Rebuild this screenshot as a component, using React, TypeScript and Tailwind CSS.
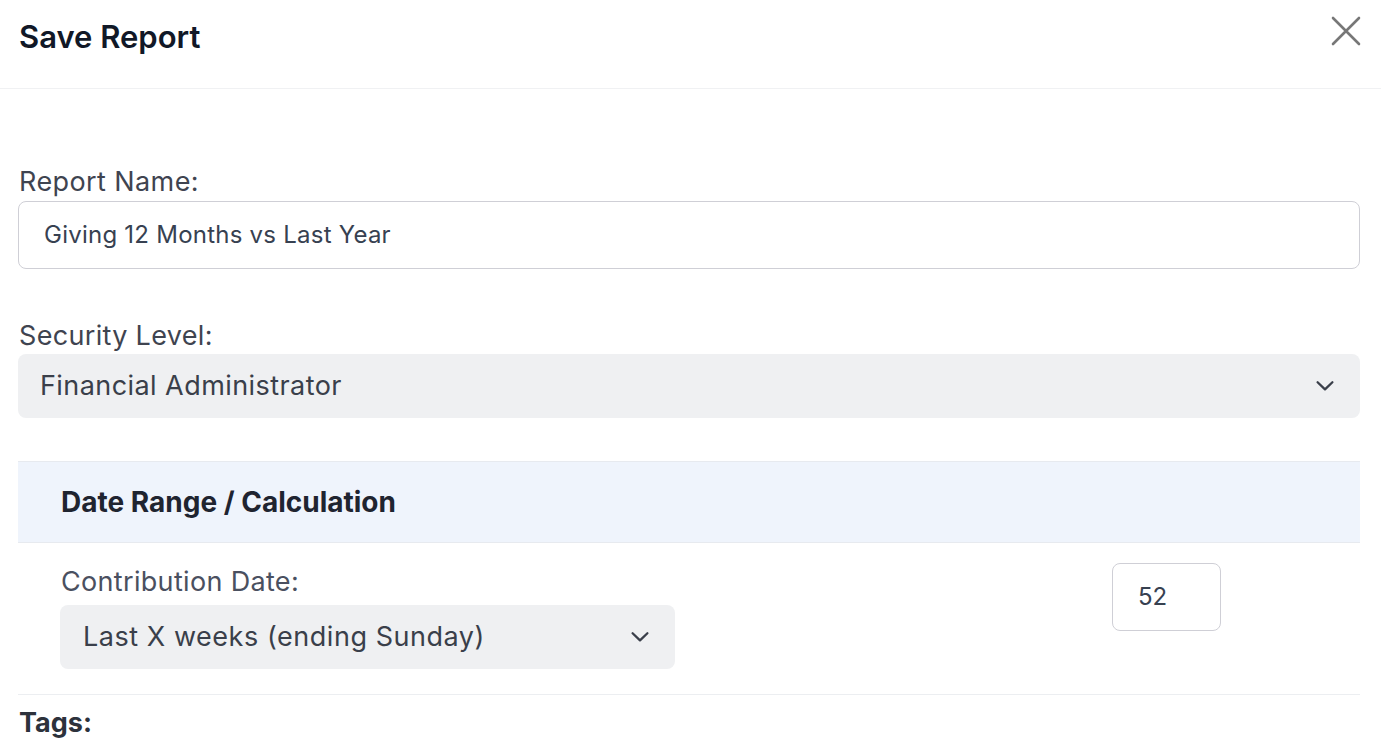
import React from "react";

const Chevron = ({ className = "" }: { className?: string }) => (
  <svg className={className} width="20" height="20" viewBox="0 0 20 20" fill="none">
    <path d="M2.6 6.2L10 13.4L17.4 6.2" stroke="#3a3f4a" strokeWidth="2.3" strokeLinecap="round" strokeLinejoin="round" />
  </svg>
);

export default function App() {
  return (
    <div className="w-[1381px] h-[739px] overflow-hidden bg-white" style={{ fontFamily: "Inter, 'Noto Sans', sans-serif" }}>
      <div className="h-[89px] border-b border-[#f0f1f3] flex items-start justify-between pl-[19px] pr-[18px]">
        <h1 className="mt-[17px] text-[31px] leading-[40px] font-semibold text-[#111827]">Save Report</h1>
        <button className="mt-[14px] w-[34px] h-[34px] flex items-center justify-center">
          <svg width="32" height="32" viewBox="0 0 32 32" fill="none">
            <path d="M3 3l26 26M29 3L3 29" stroke="#777777" strokeWidth="2.6" strokeLinecap="round" />
          </svg>
        </button>
      </div>
      <div className="pl-[18px] pr-[21px] pt-[76px]">
        <label className="block pl-px text-[27px] leading-[34px] tracking-[0.015em] text-[#3f4450]">Report Name:</label>
        <div className="mt-[2px] h-[68px] rounded-[8px] border border-[#cfcfd6] flex items-center pl-[25px] text-[24px] tracking-[0.01em] text-[#374151]">
          Giving 12 Months vs Last Year
        </div>
        <label className="block mt-[50px] pl-px text-[27px] leading-[34px] tracking-[0.012em] text-[#3f4450]">Security Level:</label>
        <div className="mt-[1px] h-[64px] rounded-[8px] bg-[#eff0f2] flex items-center justify-between pl-[22px] pr-[25px] text-[27px] tracking-[0.016em] text-[#3a3f4a]">
          <span>Financial Administrator</span>
          <Chevron />
        </div>
        <div className="mt-[43px] h-[82px] border-y border-[#e7eaef] bg-[#eff4fc] flex items-center pl-[43px]">
          <span className="text-[28px] font-bold text-[#1f2430]">Date Range / Calculation</span>
        </div>
        <div className="h-[152px] border-b border-[#eceef1] flex items-start pl-[42px] pt-[22px]">
          <div className="w-[615px]">
            <label className="block text-[27px] leading-[34px] tracking-[0.012em] text-[#4a5060] pl-px">Contribution Date:</label>
            <div className="mt-[6px] h-[64px] rounded-[8px] bg-[#eff0f2] flex items-center justify-between pl-[23px] pr-[25px] text-[27px] tracking-[0.02em] text-[#3a3f4a]">
              <span>Last X weeks (ending Sunday)</span>
              <Chevron />
            </div>
          </div>
          <div className="ml-[437px] -mt-[2px] w-[109px] h-[68px] rounded-[8px] border border-[#cfcfd6] flex items-center pl-[25px] text-[24px] text-[#374151]">
            52
          </div>
        </div>
        <div className="pt-[10px] pl-px text-[27px] font-bold text-[#2d323c] leading-[36px]">Tags:</div>
      </div>
    </div>
  );
}
